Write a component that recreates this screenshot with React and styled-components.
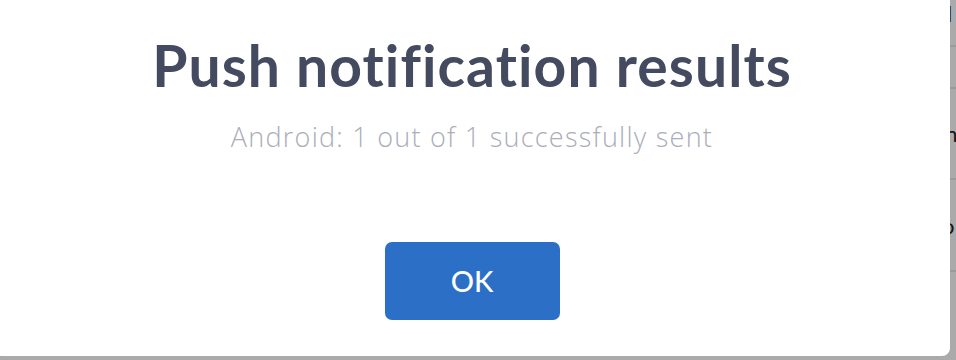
import React from "react";
import styled, { createGlobalStyle } from "styled-components";

const Global = createGlobalStyle`
  html, body { margin: 0; padding: 0; width: 956px; height: 360px; overflow: hidden; background: #ffffff; }
  * { box-sizing: border-box; }
`;

const Page = styled.div`
  position: relative;
  width: 956px;
  height: 360px;
  overflow: hidden;
  background: #ffffff;
  font-family: Lato, "Liberation Sans", sans-serif;
`;

const Table = styled.div`
  display: flex;
  flex-direction: column;
  width: 100%;
`;

const Row = styled.div`
  height: ${(p) => p.$h}px;
  border-bottom: 2px solid ${(p) => (p.$line ? "#e8e8ee" : "transparent")};
  display: flex;
  align-items: ${(p) => p.$align || "center"};
  padding-left: ${(p) => p.$pad}px;
  color: #222222;
  font-size: 22px;
  white-space: nowrap;
`;

const Overlay = styled.div`
  position: absolute;
  inset: 0;
  background: rgba(0, 0, 0, 0.335);
`;

const Modal = styled.div`
  position: absolute;
  left: -6px;
  top: -10px;
  width: 956px;
  height: 366px;
  background: #ffffff;
  border-radius: 8px;
  display: flex;
  flex-direction: column;
  align-items: center;
  padding-top: 41px;
`;

const Title = styled.h1`
  margin: 0;
  font-family: Lato, "Liberation Sans", sans-serif;
  font-weight: 700;
  font-size: 57px;
  letter-spacing: 1.1px;
  line-height: 1.2;
  color: #444a5f;
`;

const Subtitle = styled.p`
  margin: 22px 0 0;
  font-family: "Open Sans", Lato, sans-serif;
  font-weight: 300;
  font-size: 27px;
  letter-spacing: 1.25px;
  line-height: 1.2;
  color: #abadba;
`;

const Button = styled.button`
  margin-top: 88px;
  width: 175px;
  height: 78px;
  border: none;
  border-radius: 7px;
  background: #2b6fc6;
  color: #ffffff;
  font-family: Lato, "Liberation Sans", sans-serif;
  font-size: 29px;
  font-weight: 500;
  cursor: pointer;
`;

export default function App() {
  return (
    <Page>
      <Global />
      <Table>
        <Row $h={47} $line $align="flex-start" $pad={947}>l</Row>
        <Row $h={42} $line $pad={940} />
        <Row $h={91} $line $pad={940}>in</Row>
        <Row $h={92} $line $pad={942}>o</Row>
        <Row $h={88} $pad={940} />
      </Table>
      <Overlay />
      <Modal role="dialog">
        <Title>Push notification results</Title>
        <Subtitle>Android: 1 out of 1 successfully sent</Subtitle>
        <Button>OK</Button>
      </Modal>
    </Page>
  );
}
